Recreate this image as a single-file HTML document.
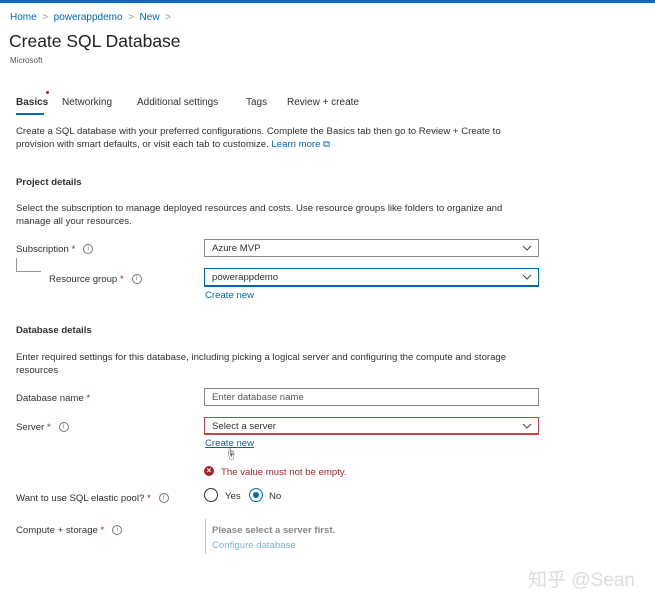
<!DOCTYPE html>
<html><head><meta charset="utf-8"><style>
body{margin:0;width:655px;height:611px;background:#fff;position:relative;overflow:hidden;font-family:"Liberation Sans","Noto Sans CJK SC",sans-serif;color:#323130;font-size:9.6px}
.a{position:absolute;white-space:nowrap;line-height:12px;margin-top:2px}
.link{color:#0067b8}
.box{position:absolute;left:204px;width:333px;height:16px;border:1px solid #8a8886;box-sizing:content-box}
.box span{position:absolute;left:7px;top:3px;font-size:9.6px;line-height:12px}
.chev{position:absolute;right:6px;top:5px}
.info{display:inline-block;width:8px;height:8px;border:1px solid #777;border-radius:50%;font-size:6px;line-height:8px;text-align:center;vertical-align:middle;margin-left:8px;color:#666}
.req{color:#a4262c}
</style></head><body>
<div style="position:absolute;left:0;top:0;width:655px;height:3px;background:#0d67c8"></div>
<div class="a link" style="left:10px;top:10px;font-size:10px">Home <span style="color:#999">&nbsp;&gt;&nbsp;</span> powerappdemo <span style="color:#999">&nbsp;&gt;&nbsp;</span> New <span style="color:#999">&nbsp;&gt;</span></div>
<div class="a" style="left:9px;top:30px;font-size:17.5px;line-height:22px;color:#222;margin-top:0">Create SQL Database</div>
<div class="a" style="left:10px;top:53px;font-size:8px;color:#555">Microsoft</div>
<div class="a" style="left:16px;top:95px;font-size:10px;font-weight:bold">Basics</div>
<div style="position:absolute;left:46px;top:91px;width:3px;height:3px;border-radius:50%;background:#a4262c"></div>
<div style="position:absolute;left:16px;top:113px;width:28px;height:2px;background:#0067b8"></div>
<div class="a" style="left:62px;top:95px;font-size:10px">Networking</div>
<div class="a" style="left:137px;top:95px;font-size:10px">Additional settings</div>
<div class="a" style="left:246px;top:95px;font-size:10px">Tags</div>
<div class="a" style="left:287px;top:95px;font-size:10px">Review + create</div>
<div class="a" style="left:16px;top:124px">Create a SQL database with your preferred configurations. Complete the Basics tab then go to Review + Create to</div>
<div class="a" style="left:16px;top:137px">provision with smart defaults, or visit each tab to customize. <span class="link">Learn more ⧉</span></div>
<div class="a" style="left:16px;top:175px;font-weight:bold">Project details</div>
<div class="a" style="left:16px;top:201px">Select the subscription to manage deployed resources and costs. Use resource groups like folders to organize and</div>
<div class="a" style="left:16px;top:214px">manage all your resources.</div>
<div class="a" style="left:16px;top:242px">Subscription <span class="req">*</span><span class="info">i</span></div>
<div class="box" style="top:239px;height:16px"><span>Azure MVP</span><svg class="chev" width="10" height="7"><path d="M1 1l4 4 4-4" stroke="#444" fill="none"/></svg></div>
<div style="position:absolute;left:16px;top:258px;width:1px;height:13px;background:#999"></div>
<div style="position:absolute;left:16px;top:271px;width:25px;height:1px;background:#999"></div>
<div class="a" style="left:49px;top:272px">Resource group <span class="req">*</span><span class="info">i</span></div>
<div class="box" style="top:268px;height:16px;border-color:#0067b8;border-width:1px 1px 2px 1px"><span>powerappdemo</span><svg class="chev" width="10" height="7"><path d="M1 1l4 4 4-4" stroke="#444" fill="none"/></svg></div>
<div class="a link" style="left:205px;top:288px">Create new</div>
<div class="a" style="left:16px;top:323px;font-weight:bold">Database details</div>
<div class="a" style="left:16px;top:350px">Enter required settings for this database, including picking a logical server and configuring the compute and storage</div>
<div class="a" style="left:16px;top:363px">resources</div>
<div class="a" style="left:16px;top:391px">Database name <span class="req">*</span></div>
<div class="box" style="top:388px;height:16px"><span style="color:#555">Enter database name</span></div>
<div class="a" style="left:16px;top:420px">Server <span class="req">*</span><span class="info">i</span></div>
<div class="box" style="top:417px;height:15px;border-color:#c8424a;border-width:1px 1px 2px 1px"><span>Select a server</span><svg class="chev" width="10" height="7"><path d="M1 1l4 4 4-4" stroke="#444" fill="none"/></svg></div>
<div class="a link" style="left:205px;top:436px;text-decoration:underline;color:#1d5e8f">Create new</div>
<div class="a" style="left:225px;top:446px;font-size:12px;color:#333">☝</div>
<div style="position:absolute;left:204px;top:466px;width:10px;height:10px;border-radius:50%;background:#a4262c;color:#fff;font-size:8px;line-height:10px;text-align:center;font-weight:bold">×</div>
<div class="a" style="left:221px;top:465px;color:#a4262c">The value must not be empty.</div>
<div class="a" style="left:16px;top:491px">Want to use SQL elastic pool? <span class="req">*</span><span class="info">i</span></div>
<div style="position:absolute;left:204px;top:488px;width:12px;height:12px;border:1px solid #333;border-radius:50%"></div>
<div class="a" style="left:225px;top:489px">Yes</div>
<div style="position:absolute;left:249px;top:488px;width:12px;height:12px;border:1px solid #0067b8;border-radius:50%"></div>
<div style="position:absolute;left:253px;top:492px;width:6px;height:6px;background:#0067b8;border-radius:50%"></div>
<div class="a" style="left:269px;top:489px">No</div>
<div class="a" style="left:16px;top:523px">Compute + storage <span class="req">*</span><span class="info">i</span></div>
<div style="position:absolute;left:205px;top:519px;width:1px;height:35px;background:#b7d08a"></div>
<div class="a" style="left:212px;top:523px;font-weight:bold;color:#8a8886">Please select a server first.</div>
<div class="a" style="left:212px;top:538px;color:#7fb2d8">Configure database</div>
<div class="a" style="left:528px;top:568px;font-size:19px;line-height:22px;color:#ddd">知乎 @Sean</div>
</body></html>
